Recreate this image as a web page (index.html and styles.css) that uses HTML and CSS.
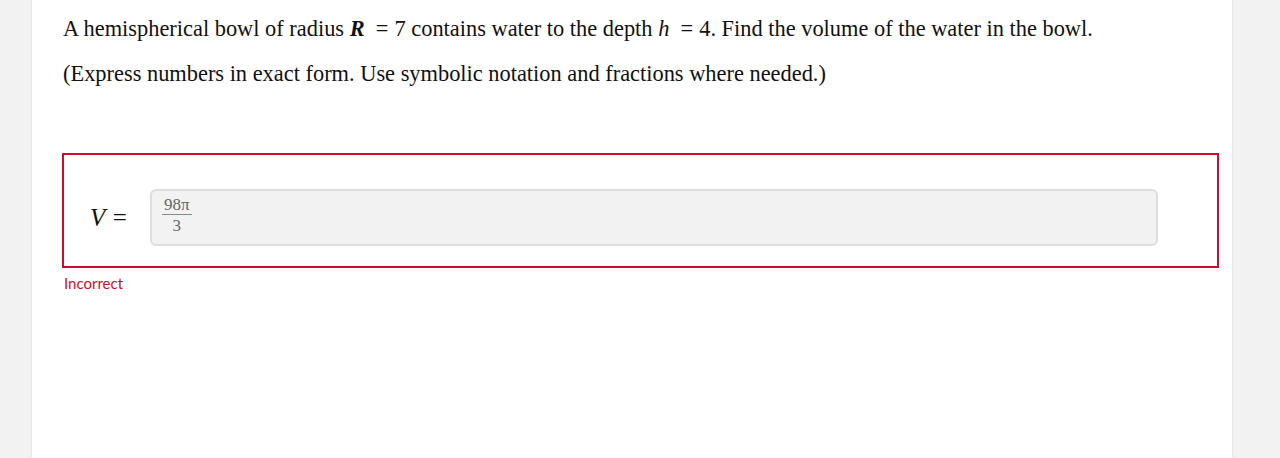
FILE: index.html
```
<!DOCTYPE html>
<html>
<head>
<meta charset="utf-8">
<link rel="stylesheet" href="styles.css">
</head>
<body>
<div class="panel">
  <p class="q">A hemispherical bowl of radius <b class="mv">R</b><span class="eq">=</span>7 contains water to the depth <i>h</i><span class="eq">=</span>4. Find the volume of the water in the bowl.</p>
  <p class="q q2">(Express numbers in exact form. Use symbolic notation and fractions where needed.)</p>
  <div class="answer">
    <div class="label"><i>V</i><span class="eq">=</span></div>
    <div class="input">
      <div class="frac">
        <span class="num">98π</span>
        <span class="den">3</span>
      </div>
    </div>
  </div>
  <div class="status">Incorrect</div>
</div>
</body>
</html>
```
FILE: styles.css
```
html, body {
  margin: 0;
  padding: 0;
  background: #f2f2f2;
  height: 100%;
}
.panel {
  margin-left: 32px;
  width: 1200px;
  min-height: 458px;
  background: #fff;
  box-shadow: 0 0 2px rgba(0,0,0,0.15);
  padding: 15px 0 0 31px;
  box-sizing: border-box;
  font-family: "Liberation Serif", "Times New Roman", serif;
  color: #111;
}
.q {
  margin: 0;
  font-size: 22.4px;
  line-height: 28px;
}
.q2 {
  margin-top: 17px;
}
.mv {
  font-style: italic;
  font-weight: bold;
}
.eq {
  display: inline-block;
  margin: 0 0.27em 0 0.5em;
}
.answer {
  margin-top: 65px;
  margin-left: -1px;
  width: 1157px;
  box-sizing: border-box;
  border: 2px solid #c8102e;
  padding: 34px 59px 20px 26px;
  display: flex;
  align-items: center;
}
.label {
  font-size: 25px;
  width: 60px;
  flex: none;
}
.label .eq {
  margin-left: 0.3em;
}
.input {
  flex: 1;
  height: 57px;
  box-sizing: border-box;
  background: #f2f2f2;
  border: 2px solid #dedede;
  border-radius: 6px;
  display: flex;
  align-items: center;
  padding-left: 10px;
}
.frac {
  display: inline-flex;
  flex-direction: column;
  align-items: center;
  font-size: 17px;
  color: #666;
  line-height: 17px;
  margin-top: -5px;
}
.num {
  border-bottom: 1px solid #888;
  padding: 0 2px 1px;
}
.den {
  padding-top: 2px;
}
.status {
  margin-top: 6px;
  margin-left: 1px;
  font-family: Lato, "Open Sans", sans-serif;
  font-size: 15px;
  color: #c8102e;
}
```
